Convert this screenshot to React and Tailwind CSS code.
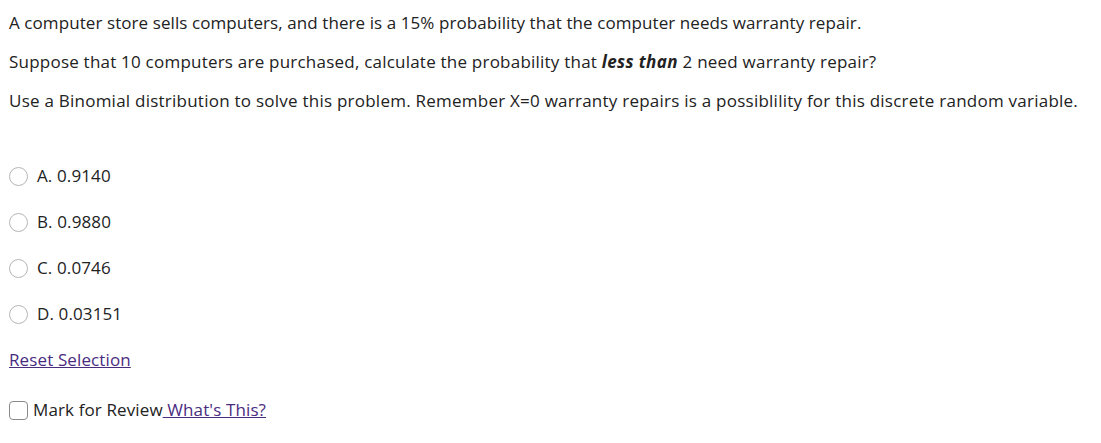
export default function App() {
  const options = ['A. 0.9140', 'B. 0.9880', 'C. 0.0746', 'D. 0.03151'];
  return (
    <div
      className="bg-white w-[1101px] h-[443px] px-[9px] pt-[11px] text-[17px] leading-[24px] tracking-[0.12px] text-[#222222]"
      style={{ fontFamily: '"Open Sans", sans-serif' }}
    >
      <div className="flex flex-col gap-[15px]">
        <p className="tracking-[0.08px]">A computer store sells computers, and there is a 15% probability that the computer needs warranty repair.</p>
        <p className="tracking-[0.22px]">
          Suppose that 10 computers are purchased, calculate the probability that{' '}
          <b className="italic font-bold tracking-[0.4px]">less than</b> 2 need warranty repair?
        </p>
        <p className="tracking-[0.24px]">
          Use a Binomial distribution to solve this problem. Remember X=0 warranty repairs is a possiblility for this discrete random variable.
        </p>
      </div>

      <div className="flex flex-col gap-[22px] mt-[51px]">
        {options.map((opt) => (
          <label key={opt} className="flex items-center gap-[9px]">
            <span className="w-[19px] h-[19px] rounded-full border border-[#b5b5b5] bg-white shrink-0" />
            <span>{opt}</span>
          </label>
        ))}
      </div>

      <div className="mt-[22px]">
        <a href="#" className="underline text-[#4a2c7f]">Reset Selection</a>
      </div>

      <div className="mt-[26px] flex items-center gap-[5px]">
        <span className="w-[19px] h-[19px] rounded-[4px] border border-[#8a8a8a] bg-white shrink-0" />
        <span>
          Mark for Review
          <a href="#" className="underline text-[#4a2c7f]"> What's This?</a>
        </span>
      </div>
    </div>
  );
}
